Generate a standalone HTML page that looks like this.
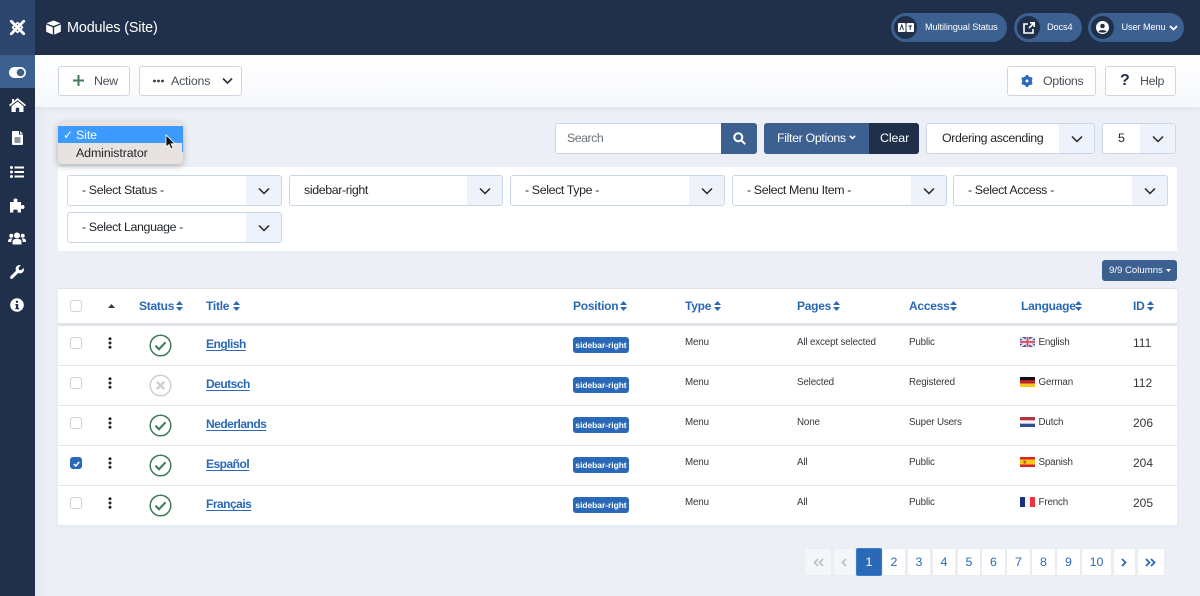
<!DOCTYPE html>
<html lang="en"><head><meta charset="utf-8"><title>Modules (Site)</title>
<style>
*{box-sizing:border-box}
html,body{margin:0;padding:0;width:1200px;height:596px;overflow:hidden;background:#ecf0f6;font-family:"Liberation Sans",sans-serif;color:#22262a}
.a,.t,svg.i{position:absolute}
.t{white-space:nowrap;line-height:16px;height:16px;letter-spacing:-.35px}
.btn{position:absolute;background:#fff;border:1px solid #cdd5e0;border-radius:3px;top:66px;height:30px}
.sel{position:absolute;height:31px;background:#fff;border:1px solid #c9d6ea;border-radius:3px;overflow:hidden}
.sel b{position:absolute;right:0;top:0;bottom:0;width:35px;background:#eef3fb}
.sel span{position:absolute;left:14px;top:6px;line-height:16px;font-size:12.4px;letter-spacing:-.38px;color:#22262a;white-space:nowrap}
.sel svg{position:absolute;right:11px;top:11px}
.pill{position:absolute;top:13px;height:29px;border-radius:15px;background:#3c6090}
.pill i{position:absolute;left:3px;top:3px;width:23px;height:23px;border-radius:50%;background:#20304a}
.pill span{position:absolute;top:7px;line-height:15px;font-size:9.2px;letter-spacing:-.1px;color:#fff;white-space:nowrap}
.th{color:#2a69b8;font-weight:bold;font-size:12px;letter-spacing:-.25px}
.sm{font-size:9.8px;letter-spacing:-.15px;color:#33383d}
.ln{position:absolute;left:58px;width:1119px;height:1px;background:#e3e6ea}
.link{color:#2a69b8;font-weight:bold;font-size:12px;letter-spacing:-.5px;text-decoration:underline;text-decoration-thickness:1px;text-underline-offset:2px}
.badge{position:absolute;left:573px;width:56px;height:16px;border-radius:3px;background:#2a69b8;color:#fff;font-weight:bold;font-size:8.4px;line-height:16px;text-align:center;white-space:nowrap}
.cb{position:absolute;left:70px;width:12px;height:12px;border:1px solid #d2d2d2;border-radius:3px;background:#fff}
.pg{position:absolute;top:548px;height:28px;background:#fff;border:1px solid #e9edf2;border-radius:2px;color:#2a69b8;font-size:12.4px;line-height:27px;text-align:center}
.id{font-size:12px;letter-spacing:0;color:#33383d}
</style></head><body>

<!-- content left shade -->
<div class="a" style="left:35px;top:107px;width:12px;height:489px;background:linear-gradient(90deg,#e3e9f3,#ecf0f6)"></div>
<!-- header -->
<div class="a" style="left:0;top:0;width:1200px;height:55px;background:#20304a"></div>
<!-- toolbar band -->
<div class="a" style="left:35px;top:55px;width:1165px;height:52px;background:linear-gradient(#fff,#f6f8fb);box-shadow:0 2px 6px rgba(40,60,90,.06)"></div>
<!-- sidebar -->
<div class="a" style="left:0;top:0;width:35px;height:596px;background:#20304a"></div>
<div class="a" style="left:0;top:0;width:35px;height:55px;background:#2c466e"></div>
<div class="a" style="left:0;top:55px;width:35px;height:33px;background:#3c6090"></div>

<!-- joomla logo -->
<svg class="i" style="left:9px;top:19px" width="17" height="17" viewBox="0 0 17 17" fill="none" stroke="#fff" stroke-linecap="round" stroke-linejoin="round">
<path d="M2.300 2.300L14.700 14.700M14.700 2.300L2.300 14.700" stroke-width="2.800"/>
<path d="M8.500 3.600L13.400 8.500 8.500 13.400 3.600 8.500Z" stroke-width="1.700"/>
</svg>
<!-- cube -->
<svg class="i" style="left:46px;top:20px" width="15" height="15" viewBox="0 0 15 15" fill="#fff"><path d="M7.500 .5L14.500 3.200 7.500 6 .5 3.200Z"/><path d="M.2 4.500L6.800 7.200V14.600L.2 11.700Z"/><path d="M14.800 4.500L8.200 7.200V14.600L14.800 11.700Z"/></svg>
<div class="t" style="left:67px;top:19px;font-size:14.400px;letter-spacing:-.15px;color:#fff;line-height:18px;height:18px">Modules (Site)</div>

<!-- sidebar icons -->
<svg class="i" style="left:9px;top:67px" width="17" height="11" viewBox="0 0 17 11"><rect width="17" height="11" rx="5.500" fill="#fff"/><circle cx="11.500" cy="5.500" r="3.800" fill="#3c6090"/></svg>
<svg class="i" style="left:9px;top:98px" width="17" height="14" viewBox="0 0 17 14" fill="#fff"><path d="M8.500 0L17 7 16 8.200 8.500 2.200 1 8.200 0 7 3 4.500V1H5V3Z"/><path d="M8.500 3.500L14.500 8.300V14H10.200V9.800H6.800V14H2.500V8.300Z"/></svg>
<svg class="i" style="left:12px;top:131px" width="11" height="14" viewBox="0 0 11 14"><path fill="#fff" d="M0 1C0 .4.400 0 1 0H7V3.500H11V13C11 13.600 10.600 14 10 14H1C.4 14 0 13.600 0 13Z"/><path fill="#fff" d="M8 0L11 2.800H8Z"/><path stroke="#20304a" d="M2.500 7H8.500M2.500 9H8.500M2.500 11H8.500"/></svg>
<svg class="i" style="left:10px;top:166px" width="14" height="12" viewBox="0 0 14 12" fill="#fff"><circle cx="1.500" cy="1.500" r="1.500"/><circle cx="1.500" cy="6" r="1.500"/><circle cx="1.500" cy="10.500" r="1.500"/><rect x="4.500" y=".5" width="9.500" height="2"/><rect x="4.500" y="5" width="9.500" height="2"/><rect x="4.500" y="9.500" width="9.500" height="2"/></svg>
<svg class="i" style="left:9px;top:198px" width="16" height="15" viewBox="0 0 16 15" fill="#fff"><path d="M1 4H5C4 2 4.500 .5 6.500 .5S9 2 8 4H12V7.500C14 6.500 15.500 7 15.500 9S14 11.500 12 10.500V14.500H8.500C9.300 12.500 8.500 11.500 6.500 11.500S3.700 12.500 4.500 14.500H1Z"/></svg>
<svg class="i" style="left:8px;top:232px" width="18" height="13" viewBox="0 0 18 13" fill="#fff"><circle cx="9" cy="3.500" r="3"/><circle cx="3.300" cy="3.800" r="2"/><circle cx="14.700" cy="3.800" r="2"/><path d="M4.500 12.500V10C4.500 8 6 7 7.500 7H10.500C12 7 13.500 8 13.500 10V12.500Z"/><path d="M0 9.500C0 7.500 1 6.500 2.500 6.500H4.500C3.500 7.500 3.300 8.500 3.300 10H.5Z"/><path d="M18 9.500C18 7.500 17 6.500 15.500 6.500H13.500C14.500 7.500 14.700 8.500 14.700 10H17.500Z"/></svg>
<svg class="i" style="left:10px;top:265px" width="14" height="14" viewBox="0 0 14 14" fill="#fff"><path d="M13.700 3L11.200 5.300 9 4.800 8.500 2.700 11 .4C9 -.4 6.400.5 5.800 2.800 5.500 4 5.700 5 6 5.800L.6 11.200C-.1 11.900-.1 13 .5 13.500 1.100 14.100 2.100 14.100 2.800 13.400L8.200 8C9 8.300 10 8.500 11.200 8.200 13.500 7.500 14.400 5 13.700 3Z"/></svg>
<svg class="i" style="left:10px;top:298px" width="14" height="14" viewBox="0 0 14 14"><circle cx="7" cy="7" r="6.800" fill="#fff"/><rect x="5.800" y="2.700" width="2.400" height="2.300" rx="1" fill="#20304a"/><path fill="#20304a" d="M5.300 6H8.200V10H9V11.300H5.300V10H6V7.300H5.300Z"/></svg>

<!-- top-right pills -->
<div class="pill" style="left:891px;width:116px"><i></i><span style="left:34px">Multilingual Status</span>
<svg class="i" style="left:7px;top:10px" width="16" height="9" viewBox="0 0 16 9"><rect width="7.500" height="9" rx="1" fill="#fff"/><rect x="8.500" width="7.500" height="9" rx="1" fill="#fff"/><path d="M2 7L3.800 2 5.500 7M10.500 3H14M12.200 3V7" stroke="#20304a" fill="none"/></svg></div>
<div class="pill" style="left:1014px;width:68px"><i></i><span style="left:33px">Docs4</span>
<svg class="i" style="left:9px;top:9px" width="12" height="12" viewBox="0 0 12 12" fill="none" stroke="#fff" stroke-width="1.600"><path d="M5 2H1V11H10V7M6 6L11 1M7 .8H11.200V5"/></svg></div>
<div class="pill" style="left:1088px;width:96px"><i></i><span style="left:33.500px">User Menu</span>
<svg class="i" style="left:8px;top:8px" width="13" height="13" viewBox="0 0 13 13"><circle cx="6.500" cy="6.500" r="6.500" fill="#fff"/><circle cx="6.500" cy="5" r="2.300" fill="#20304a"/><path d="M2.500 10.500C3.500 8.500 9.500 8.500 10.500 10.500 9 12 4 12 2.500 10.500Z" fill="#20304a"/></svg>
<svg class="i" style="left:81px;top:12px" width="9" height="6" viewBox="0 0 9 6" fill="none" stroke="#fff" stroke-width="1.800"><path d="M1 1L4.500 4.500 8 1"/></svg></div>

<!-- toolbar buttons -->
<div class="btn" style="left:58px;width:72px"></div>
<svg class="i" style="left:73px;top:75px" width="11" height="11" viewBox="0 0 11 11"><path d="M5.500 0V11M0 5.500H11" stroke="#3f7d55" stroke-width="2"/></svg>
<div class="t" style="left:94px;top:73px;font-size:12.400px;color:#495057">New</div>
<div class="btn" style="left:139px;width:103px"></div>
<svg class="i" style="left:153px;top:79px" width="11" height="4" viewBox="0 0 11 4" fill="#33383d"><circle cx="1.500" cy="2" r="1.400"/><circle cx="5.500" cy="2" r="1.400"/><circle cx="9.500" cy="2" r="1.400"/></svg>
<div class="t" style="left:171px;top:73px;font-size:12.400px;letter-spacing:-.2px;color:#495057">Actions</div>
<svg class="i" style="left:222px;top:77px" width="11" height="8" viewBox="0 0 11 8" fill="none" stroke="#33383d" stroke-width="1.800"><path d="M1 1.500L5.500 6 10 1.500"/></svg>

<div class="btn" style="left:1007px;width:89px"></div>
<svg class="i" style="left:1021px;top:75px" width="12" height="12" viewBox="0 0 12 12"><circle cx="6" cy="6" r="3.700" fill="none" stroke="#2a69b8" stroke-width="2.600"/><path d="M6 0V12M.8 3L11.200 9M.8 9L11.200 3" stroke="#2a69b8" stroke-width="2.200"/><circle cx="6" cy="6" r="1.500" fill="#fff"/></svg>
<div class="t" style="left:1043px;top:73px;font-size:12.400px;color:#495057">Options</div>
<div class="btn" style="left:1105px;width:71px"></div>
<div class="t" style="left:1120px;top:72px;font-size:16px;line-height:18px;height:18px;font-weight:bold;color:#20304a">?</div>
<div class="t" style="left:1140px;top:73px;font-size:12.400px;color:#495057">Help</div>

<!-- search row -->
<div class="a" style="left:555px;top:123px;width:170px;height:31px;background:#fff;border:1px solid #c9d6ea;border-radius:3px"></div>
<div class="t" style="left:567px;top:130px;font-size:12.400px;letter-spacing:-.5px;color:#6d757e">Search</div>
<div class="a" style="left:721px;top:123px;width:36px;height:31px;background:#3c6090;border-radius:0 3px 3px 0"></div>
<svg class="i" style="left:733px;top:132px" width="13" height="13" viewBox="0 0 13 13" fill="none" stroke="#fff" stroke-width="2"><circle cx="5.300" cy="5.300" r="4"/><path d="M8.300 8.300L12.200 12.200"/></svg>
<div class="a" style="left:764px;top:123px;width:106px;height:31px;background:#3c6090;border-radius:3px 0 0 3px"></div>
<div class="t" style="left:777px;top:130px;font-size:12.400px;color:#fff">Filter Options</div>
<svg class="i" style="left:849px;top:135px" width="7" height="5" viewBox="0 0 7 5" fill="none" stroke="#fff" stroke-width="1.600"><path d="M.8 .8L3.500 3.500 6.200 .8"/></svg>
<div class="a" style="left:869px;top:123px;width:50px;height:31px;background:#20304a;border-radius:0 3px 3px 0"></div>
<div class="t" style="left:880px;top:130px;font-size:12.400px;letter-spacing:-.1px;color:#fff">Clear</div>
<div class="sel" style="left:926px;top:123px;width:169px"><b></b><span style="left:15px">Ordering ascending</span><svg width="12" height="8" viewBox="0 0 12 8" fill="none" stroke="#22262a" stroke-width="1.500"><path d="M1 1.500L6 6.500 11 1.500"/></svg></div>
<div class="sel" style="left:1102px;top:123px;width:74px"><b></b><span style="left:15px">5</span><svg width="12" height="8" viewBox="0 0 12 8" fill="none" stroke="#22262a" stroke-width="1.500"><path d="M1 1.500L6 6.500 11 1.500"/></svg></div>

<!-- filter panel -->
<div class="a" style="left:58px;top:167px;width:1119px;height:84px;background:#fff"></div>
<div class="sel" style="left:67px;top:175px;width:215px"><b></b><span>- Select Status -</span><svg width="12" height="8" viewBox="0 0 12 8" fill="none" stroke="#22262a" stroke-width="1.500"><path d="M1 1.500L6 6.500 11 1.500"/></svg></div>
<div class="sel" style="left:289px;top:175px;width:214px"><b></b><span>sidebar-right</span><svg width="12" height="8" viewBox="0 0 12 8" fill="none" stroke="#22262a" stroke-width="1.500"><path d="M1 1.500L6 6.500 11 1.500"/></svg></div>
<div class="sel" style="left:510px;top:175px;width:215px"><b></b><span>- Select Type -</span><svg width="12" height="8" viewBox="0 0 12 8" fill="none" stroke="#22262a" stroke-width="1.500"><path d="M1 1.500L6 6.500 11 1.500"/></svg></div>
<div class="sel" style="left:732px;top:175px;width:215px"><b></b><span>- Select Menu Item -</span><svg width="12" height="8" viewBox="0 0 12 8" fill="none" stroke="#22262a" stroke-width="1.500"><path d="M1 1.500L6 6.500 11 1.500"/></svg></div>
<div class="sel" style="left:953px;top:175px;width:215px"><b></b><span>- Select Access -</span><svg width="12" height="8" viewBox="0 0 12 8" fill="none" stroke="#22262a" stroke-width="1.500"><path d="M1 1.500L6 6.500 11 1.500"/></svg></div>
<div class="sel" style="left:67px;top:212px;width:215px"><b></b><span>- Select Language -</span><svg width="12" height="8" viewBox="0 0 12 8" fill="none" stroke="#22262a" stroke-width="1.500"><path d="M1 1.500L6 6.500 11 1.500"/></svg></div>

<!-- site dropdown -->
<div class="a" style="left:58px;top:122px;width:125px;height:42px;background:#e8e2e0;border-radius:4px;box-shadow:0 2px 7px rgba(0,0,0,.28)"></div>
<div class="a" style="left:58px;top:126px;width:125px;height:17px;background:#3d9bff"></div>
<div class="a" style="left:182px;top:143px;width:1px;height:9px;background:#3d9bff"></div>
<div class="t" style="left:63px;top:127px;font-size:12px;color:#fff">✓</div>
<div class="t" style="left:76px;top:127px;font-size:12.400px;letter-spacing:-.1px;color:#fff">Site</div>
<div class="t" style="left:76px;top:145px;font-size:12.400px;letter-spacing:-.1px;color:#22262a">Administrator</div>
<svg class="i" style="left:165px;top:134px" width="12" height="17" viewBox="0 0 12 17"><path d="M1 1V13L4 10.500 6 15 8 14 6 9.800H10Z" fill="#111" stroke="#fff" stroke-width=".8"/></svg>

<!-- columns button -->
<div class="a" style="left:1102px;top:260px;width:75px;height:21px;background:#3c6090;border-radius:3px"></div>
<div class="t" style="left:1109px;top:263px;font-size:9.600px;letter-spacing:0;color:#fff">9/9 Columns</div>
<svg class="i" style="left:1166px;top:269px" width="5" height="3" viewBox="0 0 5 3" fill="#fff"><path d="M0 0H5L2.500 3Z"/></svg>

<!-- table -->
<div class="a" style="left:58px;top:288px;width:1119px;height:237px;background:#fff;border-top:1px solid #dfe3e8;box-shadow:0 2px 4px rgba(40,60,90,.05)"></div>
<div class="a" style="left:58px;top:323px;width:1119px;height:3px;background:#dfe3e8"></div>
<div class="ln" style="top:365px"></div><div class="ln" style="top:405px"></div><div class="ln" style="top:445px"></div><div class="ln" style="top:485px"></div>

<div class="cb" style="top:300px"></div>
<svg class="i" style="left:108px;top:304px" width="7" height="4" viewBox="0 0 7 4" fill="#33383d"><path d="M3.500 0L7 4H0Z"/></svg>
<div class="t th" style="left:139px;top:298px">Status</div>
<div class="t th" style="left:206px;top:298px">Title</div>
<div class="t th" style="left:573px;top:298px">Position</div>
<div class="t th" style="left:685px;top:298px">Type</div>
<div class="t th" style="left:797px;top:298px">Pages</div>
<div class="t th" style="left:909px;top:298px">Access</div>
<div class="t th" style="left:1021px;top:298px">Language</div>
<div class="t th" style="left:1133px;top:298px">ID</div>
<svg class="i" style="left:176px;top:301px" width="7" height="10" viewBox="0 0 7 10" fill="#2a69b8"><path d="M3.500 0L7 4H0ZM0 6H7L3.500 10Z"/></svg>
<svg class="i" style="left:233px;top:301px" width="7" height="10" viewBox="0 0 7 10" fill="#2a69b8"><path d="M3.500 0L7 4H0ZM0 6H7L3.500 10Z"/></svg>
<svg class="i" style="left:620px;top:301px" width="7" height="10" viewBox="0 0 7 10" fill="#2a69b8"><path d="M3.500 0L7 4H0ZM0 6H7L3.500 10Z"/></svg>
<svg class="i" style="left:714px;top:301px" width="7" height="10" viewBox="0 0 7 10" fill="#2a69b8"><path d="M3.500 0L7 4H0ZM0 6H7L3.500 10Z"/></svg>
<svg class="i" style="left:833px;top:301px" width="7" height="10" viewBox="0 0 7 10" fill="#2a69b8"><path d="M3.500 0L7 4H0ZM0 6H7L3.500 10Z"/></svg>
<svg class="i" style="left:950px;top:301px" width="7" height="10" viewBox="0 0 7 10" fill="#2a69b8"><path d="M3.500 0L7 4H0ZM0 6H7L3.500 10Z"/></svg>
<svg class="i" style="left:1075px;top:301px" width="7" height="10" viewBox="0 0 7 10" fill="#2a69b8"><path d="M3.500 0L7 4H0ZM0 6H7L3.500 10Z"/></svg>
<svg class="i" style="left:1147px;top:301px" width="7" height="10" viewBox="0 0 7 10" fill="#2a69b8"><path d="M3.500 0L7 4H0ZM0 6H7L3.500 10Z"/></svg>

<!-- row 1 -->
<div class="cb" style="top:337px"></div>
<svg class="i" style="left:108px;top:337px" width="4" height="12" viewBox="0 0 4 12" fill="#22262a"><circle cx="2" cy="1.700" r="1.500"/><circle cx="2" cy="6" r="1.500"/><circle cx="2" cy="10.300" r="1.500"/></svg>
<svg class="i" style="left:149px;top:333.500px" width="23" height="23" viewBox="0 0 23 23" fill="none" stroke="#3f7d55"><circle cx="11.500" cy="11.500" r="10.300" stroke-width="1.500"/><path d="M6.500 11.700L10 15.200 16.500 8.300" stroke-width="2.100"/></svg>
<div class="t link" style="left:206px;top:336px">English</div>
<div class="badge" style="top:337px">sidebar-right</div>
<div class="t sm" style="left:685px;top:335px">Menu</div>
<div class="t sm" style="left:797px;top:335px">All except selected</div>
<div class="t sm" style="left:909px;top:335px">Public</div>
<svg class="i" style="left:1020px;top:337px" width="15" height="10" viewBox="0 0 15 10"><rect width="15" height="10" fill="#3d4f8f"/><path d="M0 0L15 10M15 0L0 10" stroke="#e8e8ee" stroke-width="2"/><path d="M7.500 0V10M0 5H15" stroke="#e8e8ee" stroke-width="3.400"/><path d="M7.500 0V10M0 5H15" stroke="#d9435e" stroke-width="1.800"/></svg>
<div class="t sm" style="left:1038.500px;top:335px">English</div>
<div class="t id" style="left:1133px;top:335px">111</div>

<!-- row 2 -->
<div class="cb" style="top:377px"></div>
<svg class="i" style="left:108px;top:377px" width="4" height="12" viewBox="0 0 4 12" fill="#22262a"><circle cx="2" cy="1.700" r="1.500"/><circle cx="2" cy="6" r="1.500"/><circle cx="2" cy="10.300" r="1.500"/></svg>
<svg class="i" style="left:149px;top:373.500px" width="23" height="23" viewBox="0 0 23 23" fill="none" stroke="#cfcfcf"><circle cx="11.500" cy="11.500" r="10.300" stroke-width="1.500"/><path d="M7.800 7.800L15.200 15.200M15.200 7.800L7.800 15.200" stroke-width="2.300"/></svg>
<div class="t link" style="left:206px;top:376px">Deutsch</div>
<div class="badge" style="top:377px">sidebar-right</div>
<div class="t sm" style="left:685px;top:375px">Menu</div>
<div class="t sm" style="left:797px;top:375px">Selected</div>
<div class="t sm" style="left:909px;top:375px">Registered</div>
<svg class="i" style="left:1020px;top:377px" width="15" height="10" viewBox="0 0 15 10"><rect width="15" height="3.400" fill="#111"/><rect y="3.400" width="15" height="3.300" fill="#c8202a"/><rect y="6.700" width="15" height="3.300" fill="#f6c81a"/></svg>
<div class="t sm" style="left:1038.500px;top:375px">German</div>
<div class="t id" style="left:1133px;top:375px">112</div>

<!-- row 3 -->
<div class="cb" style="top:417px"></div>
<svg class="i" style="left:108px;top:417px" width="4" height="12" viewBox="0 0 4 12" fill="#22262a"><circle cx="2" cy="1.700" r="1.500"/><circle cx="2" cy="6" r="1.500"/><circle cx="2" cy="10.300" r="1.500"/></svg>
<svg class="i" style="left:149px;top:413.500px" width="23" height="23" viewBox="0 0 23 23" fill="none" stroke="#3f7d55"><circle cx="11.500" cy="11.500" r="10.300" stroke-width="1.500"/><path d="M6.500 11.700L10 15.200 16.500 8.300" stroke-width="2.100"/></svg>
<div class="t link" style="left:206px;top:416px">Nederlands</div>
<div class="badge" style="top:417px">sidebar-right</div>
<div class="t sm" style="left:685px;top:415px">Menu</div>
<div class="t sm" style="left:797px;top:415px">None</div>
<div class="t sm" style="left:909px;top:415px">Super Users</div>
<svg class="i" style="left:1020px;top:417px" width="15" height="10" viewBox="0 0 15 10"><rect width="15" height="3.400" fill="#b33440"/><rect y="3.400" width="15" height="3.300" fill="#f4f4f4"/><rect y="6.700" width="15" height="3.300" fill="#2f4f95"/></svg>
<div class="t sm" style="left:1038.500px;top:415px">Dutch</div>
<div class="t id" style="left:1133px;top:415px">206</div>

<!-- row 4 -->
<div class="cb" style="top:457px;background:#2a69b8;border-color:#2a69b8"></div>
<svg class="i" style="left:72.500px;top:460.500px" width="7" height="6" viewBox="0 0 7 6" fill="none" stroke="#fff" stroke-width="1.500"><path d="M.8 3L2.800 5 6.200 1"/></svg>
<svg class="i" style="left:108px;top:457px" width="4" height="12" viewBox="0 0 4 12" fill="#22262a"><circle cx="2" cy="1.700" r="1.500"/><circle cx="2" cy="6" r="1.500"/><circle cx="2" cy="10.300" r="1.500"/></svg>
<svg class="i" style="left:149px;top:453.500px" width="23" height="23" viewBox="0 0 23 23" fill="none" stroke="#3f7d55"><circle cx="11.500" cy="11.500" r="10.300" stroke-width="1.500"/><path d="M6.500 11.700L10 15.200 16.500 8.300" stroke-width="2.100"/></svg>
<div class="t link" style="left:206px;top:456px">Español</div>
<div class="badge" style="top:457px">sidebar-right</div>
<div class="t sm" style="left:685px;top:455px">Menu</div>
<div class="t sm" style="left:797px;top:455px">All</div>
<div class="t sm" style="left:909px;top:455px">Public</div>
<svg class="i" style="left:1020px;top:457px" width="15" height="10" viewBox="0 0 15 10"><rect width="15" height="10" fill="#d8232a"/><rect y="2.500" width="15" height="5" fill="#f8c81e"/><rect x="3.500" y="3.500" width="2.500" height="3" fill="#b5602a"/></svg>
<div class="t sm" style="left:1038.500px;top:455px">Spanish</div>
<div class="t id" style="left:1133px;top:455px">204</div>

<!-- row 5 -->
<div class="cb" style="top:497px"></div>
<svg class="i" style="left:108px;top:497px" width="4" height="12" viewBox="0 0 4 12" fill="#22262a"><circle cx="2" cy="1.700" r="1.500"/><circle cx="2" cy="6" r="1.500"/><circle cx="2" cy="10.300" r="1.500"/></svg>
<svg class="i" style="left:149px;top:493.500px" width="23" height="23" viewBox="0 0 23 23" fill="none" stroke="#3f7d55"><circle cx="11.500" cy="11.500" r="10.300" stroke-width="1.500"/><path d="M6.500 11.700L10 15.200 16.500 8.300" stroke-width="2.100"/></svg>
<div class="t link" style="left:206px;top:496px">Français</div>
<div class="badge" style="top:497px">sidebar-right</div>
<div class="t sm" style="left:685px;top:495px">Menu</div>
<div class="t sm" style="left:797px;top:495px">All</div>
<div class="t sm" style="left:909px;top:495px">Public</div>
<svg class="i" style="left:1020px;top:497px" width="15" height="10" viewBox="0 0 15 10"><rect width="5" height="10" fill="#1c2f80"/><rect x="5" width="5" height="10" fill="#f6f6f6"/><rect x="10" width="5" height="10" fill="#f5323f"/></svg>
<div class="t sm" style="left:1038.500px;top:495px">French</div>
<div class="t id" style="left:1133px;top:495px">205</div>

<!-- pagination -->
<div class="pg" style="left:804px;width:28px;background:#f4f6f9;color:#bbb;font-weight:bold"></div>
<svg class="i" style="left:813px;top:558px" width="11" height="9" viewBox="0 0 11 9" fill="none" stroke="#bdc1c6" stroke-width="1.800"><path d="M5 1L1.500 4.500 5 8M10 1L6.500 4.500 10 8"/></svg>
<div class="pg" style="left:833px;width:23px;background:#f4f6f9"></div>
<svg class="i" style="left:841px;top:558px" width="6" height="9" viewBox="0 0 6 9" fill="none" stroke="#bdc1c6" stroke-width="1.800"><path d="M5 1L1.500 4.500 5 8"/></svg>
<div class="pg" style="left:856px;width:26px;background:#2a69b8;color:#fff;border-color:#3f7cc6">1</div>
<div class="pg" style="left:882px;width:24px">2</div>
<div class="pg" style="left:907px;width:24px">3</div>
<div class="pg" style="left:932px;width:24px">4</div>
<div class="pg" style="left:957px;width:24px">5</div>
<div class="pg" style="left:981px;width:25px">6</div>
<div class="pg" style="left:1006px;width:25px">7</div>
<div class="pg" style="left:1031px;width:25px">8</div>
<div class="pg" style="left:1056px;width:25px">9</div>
<div class="pg" style="left:1081px;width:31px">10</div>
<div class="pg" style="left:1113px;width:23px"></div>
<svg class="i" style="left:1121px;top:558px" width="6" height="9" viewBox="0 0 6 9" fill="none" stroke="#2a69b8" stroke-width="1.800"><path d="M1 1L4.500 4.500 1 8"/></svg>
<div class="pg" style="left:1137px;width:28px"></div>
<svg class="i" style="left:1145px;top:558px" width="11" height="9" viewBox="0 0 11 9" fill="none" stroke="#2a69b8" stroke-width="1.800"><path d="M1 1L4.500 4.500 1 8M6 1L9.500 4.500 6 8"/></svg>

</body></html>
